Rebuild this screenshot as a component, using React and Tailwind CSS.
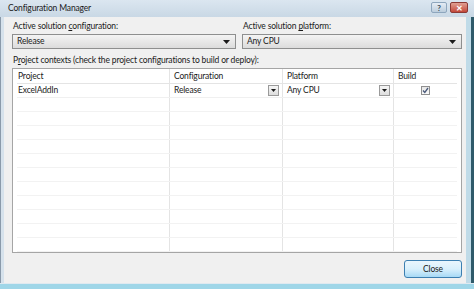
import React from 'react';

const font = { fontFamily: 'Lato, "Open Sans", "Liberation Sans", sans-serif' };

function Arrow() {
  return (
    <svg width="7" height="4" viewBox="0 0 7 4">
      <path d="M0 0h7L3.5 4z" fill="#1a1a1a" />
    </svg>
  );
}

function Combo({ value }) {
  return (
    <div className="flex h-[15px] items-center justify-between border border-[#8e8f8f] bg-gradient-to-b from-[#f4f4f4] to-[#dcdcdc] pl-[4px] pr-[5px]">
      <span className="text-[8.5px] leading-none text-[#1a1a1a]">{value}</span>
      <Arrow />
    </div>
  );
}

function CellButton() {
  return (
    <div className="flex h-[11px] w-[11px] items-center justify-center border border-[#9a9a9a] bg-gradient-to-b from-[#f6f6f6] to-[#dddddd]">
      <svg width="5" height="3" viewBox="0 0 5 3">
        <path d="M0 0h5L2.5 3z" fill="#1a1a1a" />
      </svg>
    </div>
  );
}

export default function App() {
  const emptyRows = Array.from({ length: 11 });
  const cols = 'grid grid-cols-[153px_113px_111px_1fr]';

  return (
    <div className="flex h-[289px] w-[474px] flex-col overflow-hidden bg-[#c4d6e4] tracking-[-0.15px] text-[#1a1a1a]" style={font}>
      {/* title bar */}
      <div className="flex h-[17px] shrink-0 items-start justify-between bg-gradient-to-b from-[#dbe6f0] to-[#c9d8e5] pl-[8px] pr-[6px]">
        <span className="pt-[4px] text-[8.5px] leading-none">Configuration Manager</span>
        <div className="flex gap-[3px] pt-[2px]">
          <div className="flex h-[11px] w-[16px] items-center justify-center rounded-[2px] border border-[#8ea6bd] bg-gradient-to-b from-[#e4ecf4] to-[#bccddd] text-[8px] font-bold leading-none text-[#3a4a5a]">?</div>
          <div className="flex h-[11px] w-[18px] items-center justify-center rounded-[2px] border border-[#8b3a35] bg-gradient-to-b from-[#e0a093] to-[#c2463a] text-[8px] font-bold leading-none text-white">✕</div>
        </div>
      </div>

      <div className="flex flex-1">
        {/* left frame */}
        <div className="w-[4px] shrink-0 border-l border-[#8a9aaa] bg-[#d6e2ec]" />

        {/* client */}
        <div className="flex flex-1 flex-col bg-[#f0f0f0] pl-[8px] pr-[4px] pt-[4px]">
          <div className="flex gap-[6px]">
            <div className="w-[224px]">
              <div className="mb-[2px] pl-[1px] text-[8.5px] leading-[11px]">
                Active solution <u>c</u>onfiguration:
              </div>
              <Combo value="Release" />
            </div>
            <div className="flex-1">
              <div className="mb-[2px] pl-[1px] text-[8.5px] leading-[11px]">
                Active solution <u>p</u>latform:
              </div>
              <Combo value="Any CPU" />
            </div>
          </div>

          <div className="mt-[6px] mb-[2px] pl-[1px] text-[8.5px] leading-[11px]">
            P<u>r</u>oject contexts (check the project configurations to build or deploy):
          </div>

          <div className="h-[185px] border border-[#a5a5a5] bg-white px-[4px]">
            <div className={`${cols} h-[15px] items-center border-b border-[#e4e4e4] text-[8.5px] leading-none`}>
              <div className="border-r border-[#e4e4e4] pl-[1px] leading-[14px]">Project</div>
              <div className="border-r border-[#e4e4e4] pl-[4px] leading-[14px]">Configuration</div>
              <div className="border-r border-[#e4e4e4] pl-[4px] leading-[14px]">Platform</div>
              <div className="pl-[4px] leading-[14px]">Build</div>
            </div>
            <div className={`${cols} h-[14px] items-center border-b border-[#f0f0f0] text-[8.5px] leading-none`}>
              <div className="flex h-full items-center border-r border-[#e4e4e4] pl-[1px]">ExcelAddIn</div>
              <div className="flex h-full items-center justify-between border-r border-[#e4e4e4] pl-[4px] pr-[3px]">
                <span>Release</span>
                <CellButton />
              </div>
              <div className="flex h-full items-center justify-between border-r border-[#e4e4e4] pl-[4px] pr-[3px]">
                <span>Any CPU</span>
                <CellButton />
              </div>
              <div className="flex h-full items-center justify-center">
                <div className="flex h-[9px] w-[9px] items-center justify-center border border-[#8f8f8f] bg-gradient-to-b from-[#e6e6e6] to-[#fafafa]">
                  <svg width="7" height="7" viewBox="0 0 7 7">
                    <path d="M1 3.5l1.8 2L6 1" fill="none" stroke="#4a5a7a" strokeWidth="1.3" />
                  </svg>
                </div>
              </div>
            </div>
            {emptyRows.map((_, i) => (
              <div key={i} className={`${cols} h-[14px] border-b border-[#f2f2f2]`}>
                <div className="border-r border-[#e4e4e4]" />
                <div className="border-r border-[#e4e4e4]" />
                <div className="border-r border-[#e4e4e4]" />
                <div />
              </div>
            ))}
          </div>

          <div className="flex justify-end pt-[7px]">
            <button className="flex h-[18px] w-[58px] items-center justify-center rounded-[3px] border border-[#3c7fb1] bg-gradient-to-b from-[#eaf6fd] via-[#d9f0fc] to-[#a7d9f5] text-[8.5px] leading-none text-[#1a1a1a]">
              Close
            </button>
          </div>
        </div>

        {/* right frame */}
        <div className="w-[8px] shrink-0 border-r-[3px] border-[#2e5a6a] bg-[#c0dbe8]" />
      </div>

      {/* bottom frame */}
      <div className="h-[6px] shrink-0 border-t border-[#dfe9f0] bg-[#9fd6e8]" />
    </div>
  );
}
